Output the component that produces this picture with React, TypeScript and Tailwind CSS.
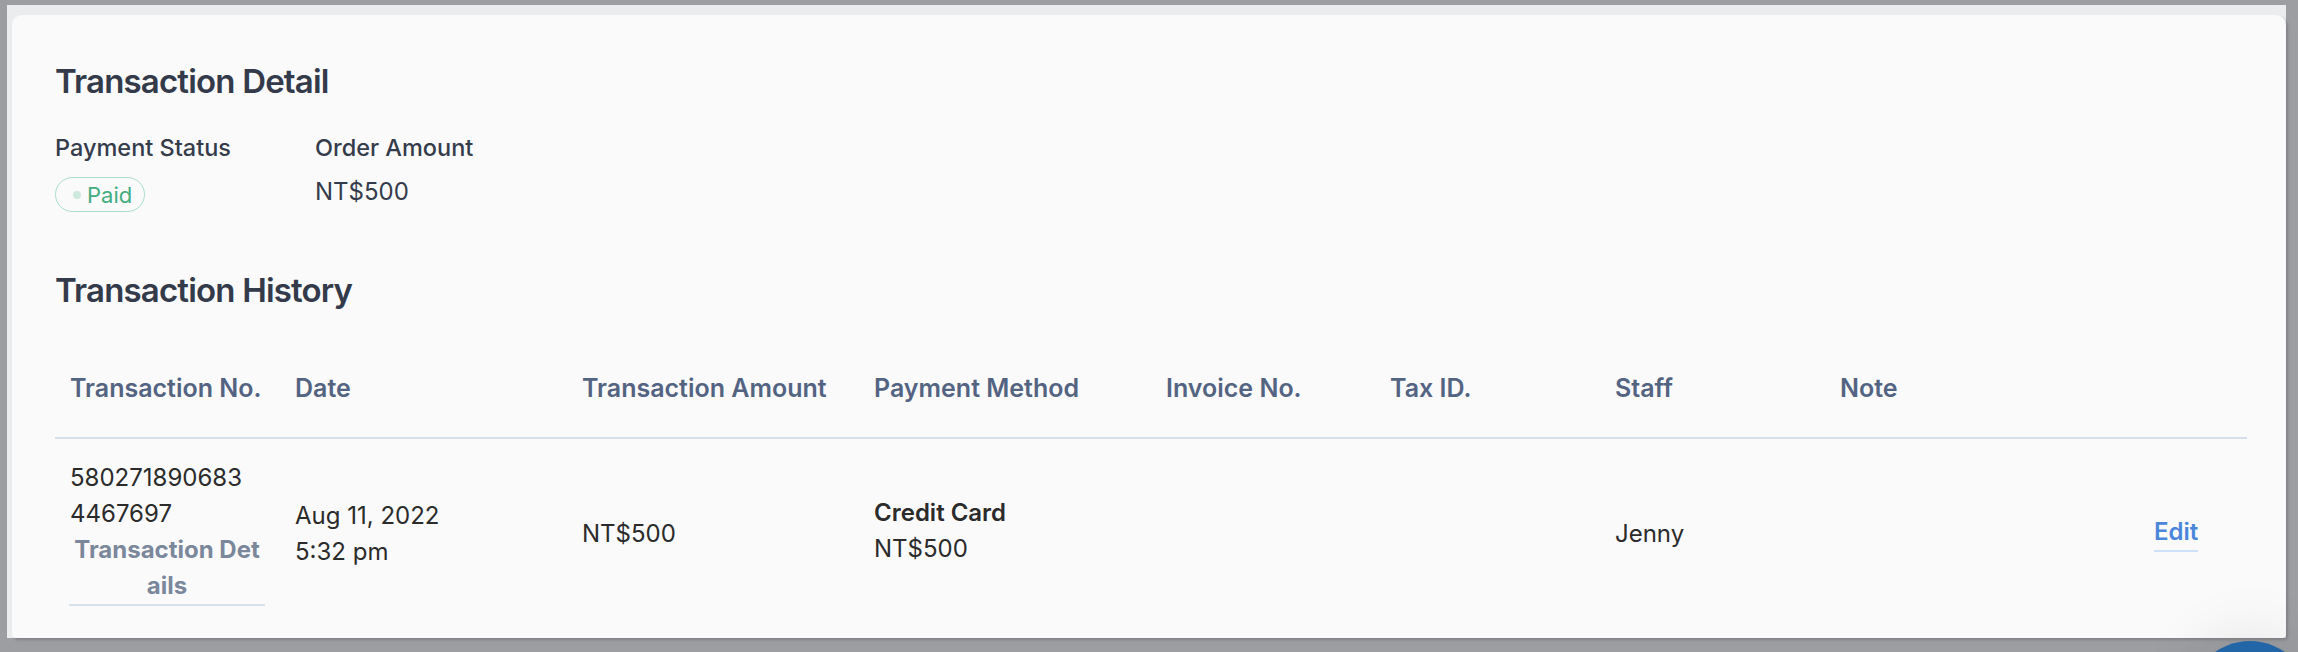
import React from 'react'

const columns = [
  'Transaction No.',
  'Date',
  'Transaction Amount',
  'Payment Method',
  'Invoice No.',
  'Tax ID.',
  'Staff',
  'Note',
  '',
]

const TransactionPanel: React.FC = () => {
  return (
    <div className="h-[623px] overflow-hidden rounded-t-[10px] rounded-b-[4px] bg-[#fafafa] pl-[43px] pr-[39px] pt-[46px] shadow-[2px_2px_3px_rgba(0,0,0,0.18)]">
      {/* Detail */}
      <h2 className="text-[33px] font-semibold leading-[40px] tracking-tight text-[#333b4b]">Transaction Detail</h2>
      <div className="mt-[29px] flex">
        <div className="w-[260px]">
          <div className="text-[23.5px] font-medium leading-[36px] text-[#343c4c]">Payment Status</div>
          <div className="mt-[11px] flex h-[35px] w-[90px] items-center rounded-full border-[1.5px] border-[#a9dec7] pl-[17px]">
            <span className="h-2 w-2 rounded-full bg-[#cde8dc]"></span>
            <span className="ml-[6px] text-[22px] leading-none text-[#43ad80]">Paid</span>
          </div>
        </div>
        <div>
          <div className="text-[23.5px] font-medium leading-[36px] text-[#343c4c]">Order Amount</div>
          <div className="mt-2 text-[24px] leading-[36px] text-[#343c4c]">NT$500</div>
        </div>
      </div>

      {/* History */}
      <h2 className="mt-[58px] text-[33px] font-semibold leading-[40px] tracking-tight text-[#333b4b]">Transaction History</h2>
      <div className="mt-[60px] grid grid-cols-[225px_287px_292px_292px_224px_225px_225px_314px_108px]">
        {columns.map((c, i) => (
          <div key={i} className="border-b-2 border-[#d6e0ea] pb-[31px] pl-[15px] text-[25px] font-semibold leading-[36px] text-[#536482]">
            {c}
          </div>
        ))}

        <div className="pl-[14px] pt-[21px] pb-[30px] text-[24px] leading-[36px] text-[#2b2b2b]">
          <div className="pl-px">580271890683<br />4467697</div>
          <div className="w-[196px] border-b-2 border-[#d8e1ea] text-center font-bold text-[#7b889c]">
            Transaction Det<br />ails
          </div>
        </div>
        <div className="flex flex-col justify-center pl-[15px] pt-[23px] pb-[30px] text-[24px] leading-[36px] text-[#2b2b2b]">
          <div>Aug 11, 2022</div>
          <div>5:32 pm</div>
        </div>
        <div className="flex items-center pl-[15px] pt-[22px] pb-[30px] text-[24px] leading-[36px] text-[#2b2b2b]">NT$500</div>
        <div className="flex flex-col justify-center pl-[15px] pt-[16px] pb-[30px] text-[24px] leading-[36px] text-[#2b2b2b]">
          <div className="font-semibold">Credit Card</div>
          <div>NT$500</div>
        </div>
        <div></div>
        <div></div>
        <div className="flex items-center pl-[15px] pt-[22px] pb-[30px] text-[24px] leading-[36px] text-[#2b2b2b]">Jenny</div>
        <div></div>
        <div className="flex items-center pl-[15px] pt-[20px] pb-[30px]">
          <span className="border-b-2 border-[#cfe1f9] text-[24px] font-semibold leading-[36px] text-[#4a87dc]">Edit</span>
        </div>
      </div>
    </div>
  )
}

export default function App() {
  return (
    <div className="relative h-[652px] w-[2298px] overflow-hidden bg-[#9d9ea2] font-['Inter',sans-serif]">
      <div className="ml-[7px] mt-[5px] h-[633px] w-[2279px] bg-[#ebecee] pl-[5px] pt-[10px]">
        <TransactionPanel />
      </div>
      {/* floating button peeking in at the bottom */}
      <div className="absolute left-[2189px] top-[641px] h-[122px] w-[122px] rounded-full bg-[#2366a8] shadow-[0_-10px_60px_rgba(0,0,0,0.08)]"></div>
    </div>
  )
}
